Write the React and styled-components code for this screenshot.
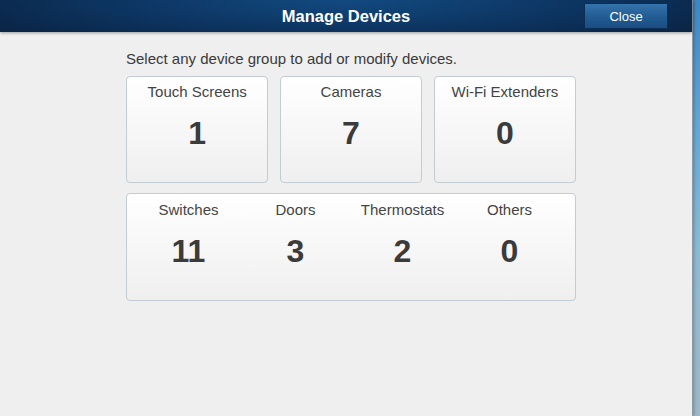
import React from 'react';
import styled, { createGlobalStyle } from 'styled-components';

const GlobalStyle = createGlobalStyle`
  html, body {
    margin: 0;
    padding: 0;
    height: 100%;
  }
  body {
    font-family: "Liberation Sans", Arial, Helvetica, sans-serif;
    overflow: hidden;
  }
  #root {
    height: 100%;
  }
`;

const topGroups = [
  { name: 'Touch Screens', count: 1 },
  { name: 'Cameras', count: 7 },
  { name: 'Wi-Fi Extenders', count: 0 },
];

const otherGroups = [
  { name: 'Switches', count: 11 },
  { name: 'Doors', count: 3 },
  { name: 'Thermostats', count: 2 },
  { name: 'Others', count: 0 },
];

const App = () => {
  return (
    <Screen>
      <GlobalStyle />
      <Dialog>
        <Header>
          <span />
          <Title>Manage Devices</Title>
          <CloseButton>Close</CloseButton>
        </Header>
        <Content>
          <Hint>Select any device group to add or modify devices.</Hint>
          <CardRow>
            {topGroups.map((g) => (
              <Card key={g.name}>
                <Label>{g.name}</Label>
                <Count>{g.count}</Count>
              </Card>
            ))}
          </CardRow>
          <WideCard>
            {otherGroups.map((g) => (
              <Group key={g.name}>
                <Label>{g.name}</Label>
                <Count>{g.count}</Count>
              </Group>
            ))}
          </WideCard>
        </Content>
      </Dialog>
    </Screen>
  );
};

const Screen = styled.div`
  display: flex;
  height: 100vh;
  background: linear-gradient(180deg, #3f86c2 0%, #63a7d2 30%, #8cbad3 60%, #9db7c6 100%);
`;

const Dialog = styled.div`
  width: 692px;
  flex: none;
  display: flex;
  flex-direction: column;
  background: #efefef;
  border-right: 1px solid #8d9aa3;
  box-shadow: 1px 0 3px rgba(0, 0, 0, 0.25);
`;

const Header = styled.div`
  height: 32px;
  flex: none;
  display: grid;
  grid-template-columns: 1fr auto 1fr;
  align-items: center;
  background: radial-gradient(ellipse 60% 160% at 50% 0%, #124a80 0%, #0d3562 55%, #0a2546 100%);
  box-shadow: 0 1px 3px rgba(0, 0, 0, 0.35);
  position: relative;
  z-index: 1;
`;

const Title = styled.h1`
  margin: 0;
  font-size: 16.5px;
  font-weight: bold;
  color: #ffffff;
`;

const CloseButton = styled.button`
  justify-self: end;
  margin-right: 24px;
  width: 84px;
  height: 26px;
  border: 1px solid #0c2e55;
  border-radius: 1px;
  background: linear-gradient(180deg, #3573ab 0%, #215b92 55%, #1a4e82 100%);
  color: #ffffff;
  font-family: inherit;
  font-size: 13px;
  cursor: pointer;
`;

const Content = styled.div`
  padding: 18px 0 0 126px;
  width: 450px;
`;

const Hint = styled.p`
  margin: 0 0 8px;
  font-size: 15px;
  line-height: 18px;
  color: #3a3a3a;
`;

const CardRow = styled.div`
  display: grid;
  grid-template-columns: repeat(3, 1fr);
  column-gap: 11.5px;
`;

const cardSurface = `
  box-sizing: border-box;
  border: 1px solid #c3ccd2;
  border-radius: 4px;
  background: linear-gradient(180deg, #ffffff 0%, #f7f7f7 50%, #efefef 100%);
`;

const Card = styled.div`
  ${cardSurface}
  height: 107px;
  padding-top: 6px;
  text-align: center;
  cursor: pointer;
`;

const WideCard = styled.div`
  ${cardSurface}
  margin-top: 10px;
  height: 108px;
  padding: 7px 0 0 8px;
  display: grid;
  grid-template-columns: repeat(4, 107px);
  cursor: pointer;
`;

const Group = styled.div`
  text-align: center;
`;

const Label = styled.div`
  font-size: 15px;
  line-height: 18px;
  color: #444444;
`;

const Count = styled.div`
  margin-top: 16px;
  font-size: 32px;
  line-height: 32px;
  font-weight: bold;
  color: #3b3b3b;
`;

export default App;
